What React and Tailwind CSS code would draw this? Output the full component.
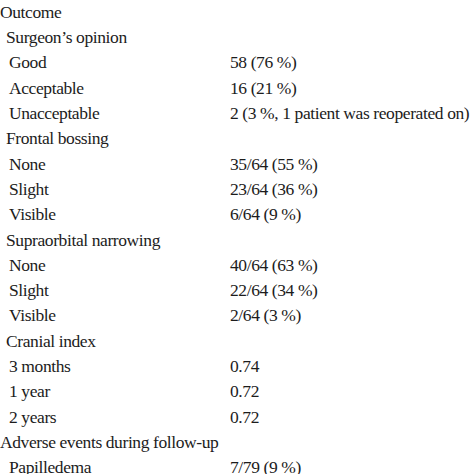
const rows = [
  { label: 'Outcome', level: 0 },
  { label: 'Surgeon’s opinion', level: 1 },
  { label: 'Good', level: 2, value: '58 (76 %)' },
  { label: 'Acceptable', level: 2, value: '16 (21 %)' },
  { label: 'Unacceptable', level: 2, value: '2 (3 %, 1 patient was reoperated on)' },
  { label: 'Frontal bossing', level: 1 },
  { label: 'None', level: 2, value: '35/64 (55 %)' },
  { label: 'Slight', level: 2, value: '23/64 (36 %)' },
  { label: 'Visible', level: 2, value: '6/64 (9 %)' },
  { label: 'Supraorbital narrowing', level: 1 },
  { label: 'None', level: 2, value: '40/64 (63 %)' },
  { label: 'Slight', level: 2, value: '22/64 (34 %)' },
  { label: 'Visible', level: 2, value: '2/64 (3 %)' },
  { label: 'Cranial index', level: 1 },
  { label: '3 months', level: 2, value: '0.74' },
  { label: '1 year', level: 2, value: '0.72' },
  { label: '2 years', level: 2, value: '0.72' },
  { label: 'Adverse events during follow-up', level: 0 },
  { label: 'Papilledema', level: 2, value: '7/79 (9 %)' },
];

const indent = ['pl-0', 'pl-[6px]', 'pl-[9px]'];

export default function App() {
  return (
    <div className="w-[474px] h-[474px] overflow-hidden bg-white text-[#1c1c1c] font-['Liberation_Serif',serif] text-[17.5px] tracking-[-0.4px] leading-none">
      <div className="grid grid-cols-[230px_1fr] auto-rows-[25.3px] items-center">
        {rows.map((r, i) => (
          <div key={i} className="contents">
            <div className={`whitespace-nowrap ${indent[r.level]}`}>{r.label}</div>
            <div className="whitespace-nowrap">{r.value || ''}</div>
          </div>
        ))}
      </div>
    </div>
  );
}
